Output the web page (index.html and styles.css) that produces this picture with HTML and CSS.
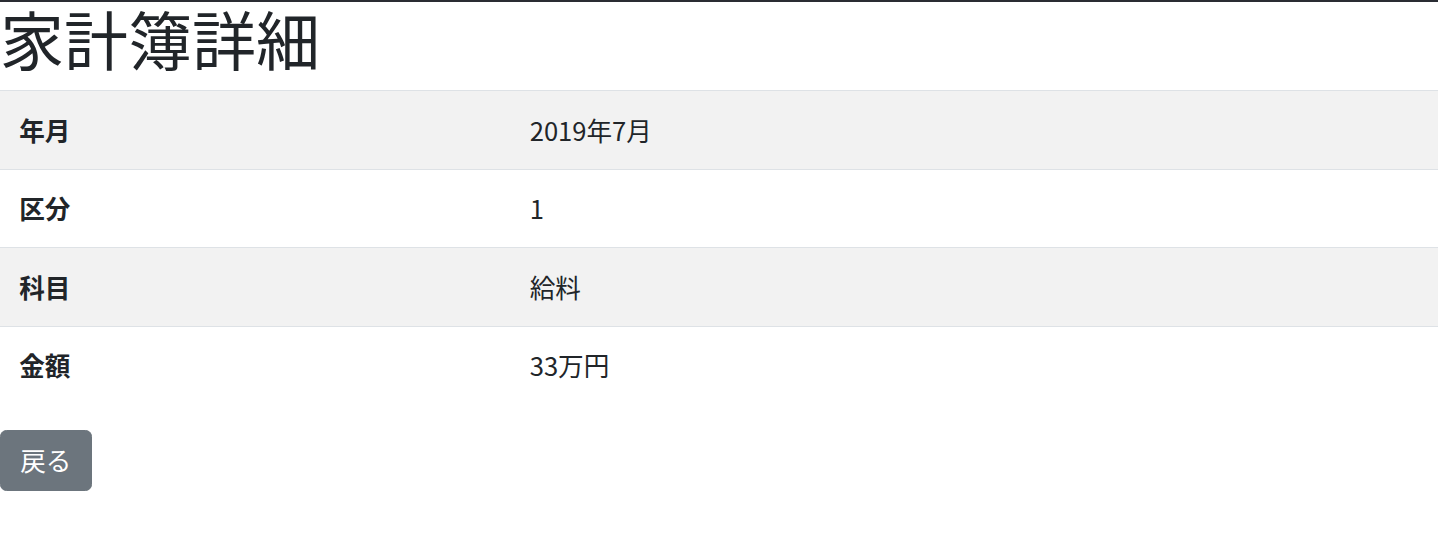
FILE: index.html
```html
<!DOCTYPE html>
<html lang="ja">
<head>
<meta charset="utf-8">
<title>家計簿詳細</title>
<link rel="stylesheet" href="styles.css">
</head>
<body>
<div class="page">
  <h1 class="title">家計簿詳細</h1>
  <table class="detail">
    <tbody>
      <tr class="odd"><th>年月</th><td>2019年7月</td></tr>
      <tr><th>区分</th><td>1</td></tr>
      <tr class="odd"><th>科目</th><td>給料</td></tr>
      <tr><th>金額</th><td>33万円</td></tr>
    </tbody>
  </table>
  <a class="btn-back" href="#">戻る</a>
</div>
</body>
</html>
```

FILE: styles.css
```css
html, body {
  margin: 0;
  padding: 0;
  background: #fff;
}
body {
  font-family: "Noto Sans CJK JP", "Noto Sans", "Liberation Sans", sans-serif;
  font-size: 25.6px;
  line-height: 1.5;
  color: #212529;
}
.page {
  border-top: 2px solid #2a2c33;
}
.title {
  margin: 0 0 18px 0;
  font-size: 64px;
  font-weight: 400;
  line-height: 70px;
}
.detail {
  width: 100%;
  border-collapse: collapse;
  margin-bottom: 26px;
}
.detail th,
.detail td {
  padding: 19.6px 19.2px;
  border-top: 1.6px solid #dee2e6;
  vertical-align: top;
  text-align: left;
}
.detail th {
  font-weight: 700;
  width: 35.5%;
}
.detail td {
  font-weight: 400;
}
.detail tr.odd {
  background: #f2f2f2;
}
.btn-back {
  display: inline-block;
  background: #6c757d;
  color: #fff;
  text-decoration: none;
  padding: 10px 19.2px;
  line-height: 1.5;
  border-radius: 6.4px;
  border: 1.6px solid #6c757d;
}
```
